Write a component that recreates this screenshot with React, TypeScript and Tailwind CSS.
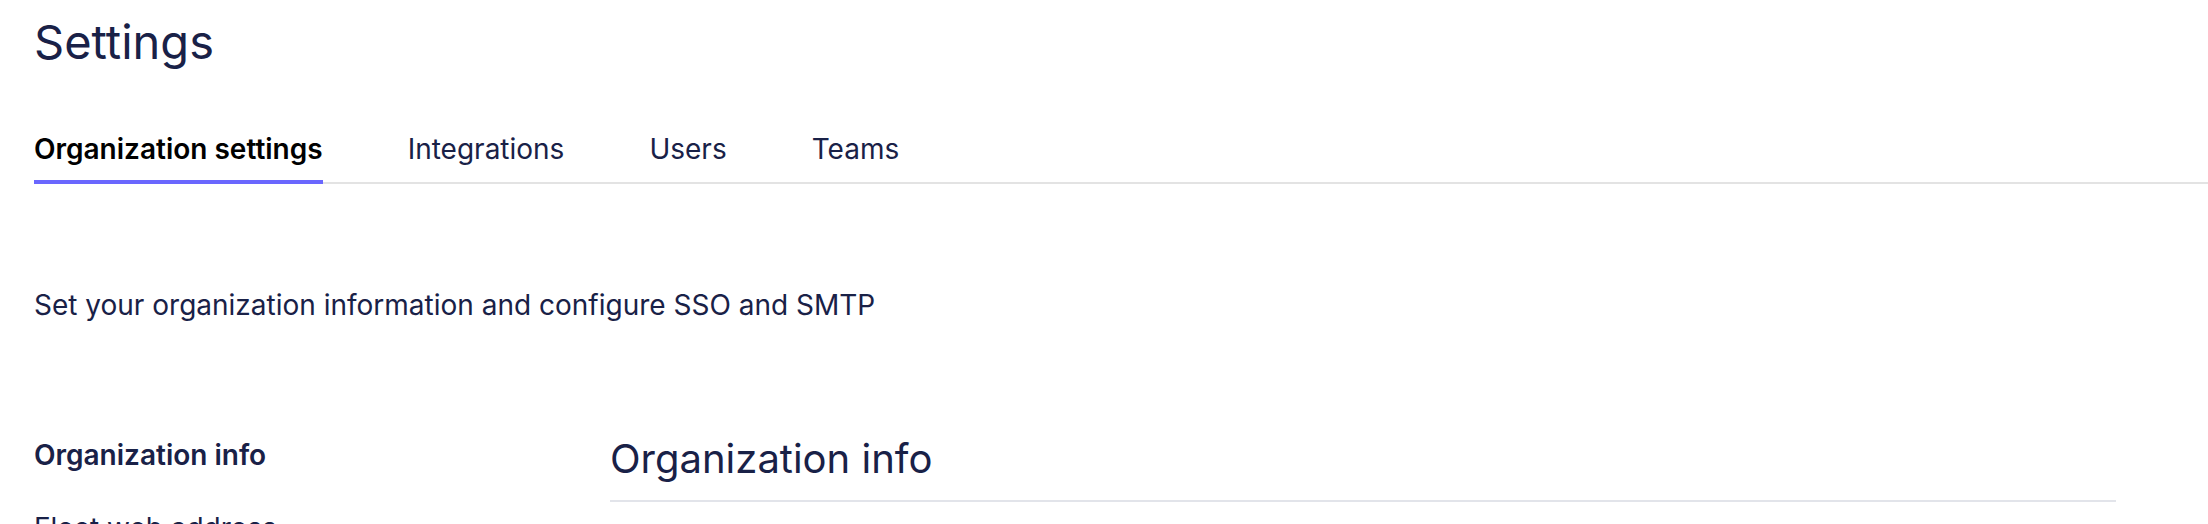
import { useState } from "react";

const tabs = ["Organization settings", "Integrations", "Users", "Teams"];

export default function App() {
  const [active, setActive] = useState(0);

  return (
    <div className="min-h-screen bg-white pl-[34px] pt-[14px] font-['Inter',sans-serif] text-[#192147]">
      {/* Page title */}
      <h1 className="text-[47px] leading-[56px] font-normal">Settings</h1>

      {/* Tabs */}
      <div className="mt-[59px] flex gap-[85px] border-b-2 border-[#e3e3e3]">
        {tabs.map((tab, i) => (
          <button
            key={tab}
            onClick={() => setActive(i)}
            className={
              i === active
                ? "-mb-[2px] border-b-4 border-[#6a67fe] pb-[11px] text-[28px] leading-[40px] font-semibold text-black"
                : "-mb-[2px] border-b-4 border-transparent pb-[11px] text-[28px] leading-[40px] font-normal text-[#192147]"
            }
          >
            {tab}
          </button>
        ))}
      </div>

      <p className="mt-[101px] text-[28px] leading-[40px]">
        Set your organization information and configure SSO and SMTP
      </p>

      {/* Settings body */}
      <div className="mt-[110px] flex">
        <nav className="flex w-[576px] shrink-0 flex-col gap-[33px]">
          <span className="text-[28px] leading-[40px] font-semibold">Organization info</span>
          <span className="text-[28px] leading-[40px]">Fleet web address</span>
        </nav>

        <section className="w-[1506px]">
          <h2 className="border-b-2 border-[#e2e4ea] pb-[17px] text-[40px] leading-[48px] font-normal">
            Organization info
          </h2>
        </section>
      </div>
    </div>
  );
}
